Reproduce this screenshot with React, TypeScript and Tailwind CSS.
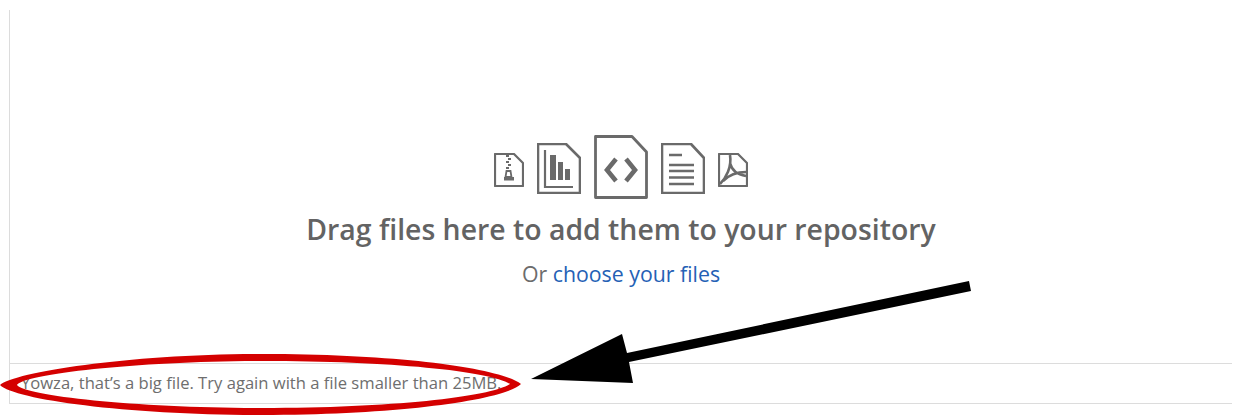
import React from 'react';

const iconStroke = '#6a6a6a';

function ZipIcon() {
  return (
    <svg width="30" height="34" viewBox="0 0 30 34" fill="none" stroke={iconStroke} className="mt-[18px]">
      <path d="M1 1H20L29 10V33H1Z" strokeWidth="2.2" strokeLinejoin="round" />
      <path d="M12 3h3M14 6h3M12 9h3M14 12h3M12 15h3" strokeWidth="1.8" />
      <path d="M12.5 18h4l1 6h-6z" strokeWidth="1.8" />
      <rect x="10" y="24" width="10" height="3.5" fill={iconStroke} stroke="none" />
    </svg>
  );
}

function ChartIcon() {
  return (
    <svg width="44" height="51" viewBox="0 0 44 51" fill="none" stroke={iconStroke} className="mt-[8px]">
      <path d="M1 1H29L43 15V50H1Z" strokeWidth="2.6" strokeLinejoin="round" />
      <path d="M8 7V44H36" strokeWidth="2.2" />
      <rect x="13" y="12" width="6" height="25" fill={iconStroke} stroke="none" />
      <rect x="21" y="19" width="5" height="18" fill={iconStroke} stroke="none" />
      <rect x="28" y="26" width="5" height="11" fill={iconStroke} stroke="none" />
    </svg>
  );
}

function CodeIcon() {
  return (
    <svg width="54" height="64" viewBox="0 0 54 64" fill="none" stroke={iconStroke}>
      <path d="M1.5 1.5H38L52.5 17V62.5H1.5Z" strokeWidth="2.8" strokeLinejoin="round" />
      <path d="M22 24L13 35L22 46M32 24L41 35L32 46" strokeWidth="4.6" />
    </svg>
  );
}

function DocIcon() {
  return (
    <svg width="44" height="51" viewBox="0 0 44 51" fill="none" stroke={iconStroke} className="mt-[8px]">
      <path d="M1 1H30L43 15V50H1Z" strokeWidth="2.6" strokeLinejoin="round" />
      <path d="M8 12H21M8 22H33M8 28H33M8 34.5H33M8 41H33" strokeWidth="2.4" />
    </svg>
  );
}

function PdfIcon() {
  return (
    <svg width="30" height="34" viewBox="0 0 30 34" fill="none" stroke={iconStroke} className="mt-[18px]">
      <path d="M1 1H20L29 10V33H1Z" strokeWidth="2.2" strokeLinejoin="round" />
      <path d="M2 31C8 25 14 14 12 2M12 10C14 18 21 22 28 23M5 28C11 22 19 19 28 19" strokeWidth="2.6" />
    </svg>
  );
}

export default function App() {
  return (
    <div className="relative h-[420px] w-[1240px] overflow-hidden bg-white font-['Open_Sans','Noto_Sans',sans-serif]">
      <div className="ml-[9px] mr-2 pt-[10px]">
        <div className="border-l border-[#dcdcdc]">
          <div className="flex h-[353px] flex-col items-center pt-[125px]">
            <div className="flex items-start gap-[13px]">
              <ZipIcon />
              <ChartIcon />
              <CodeIcon />
              <DocIcon />
              <PdfIcon />
            </div>
            <h2 className="mt-[11px] text-[28.4px] leading-[38px] font-semibold text-[#636363]">
              Drag files here to add them to your repository
            </h2>
            <p className="mt-[12px] text-[21.3px] leading-[28px] text-[#6c6c6c]">
              Or <a className="text-[#2561b5]">choose your files</a>
            </p>
          </div>
          <div className="flex h-[41px] items-center border-y border-[#dcdcdc] pl-[11px] text-[16.6px] text-[#6e6e6e]">
            Yowza, that’s a big file. Try again with a file smaller than 25MB.
          </div>
        </div>
      </div>

      {/* hand drawn annotation on top of the screenshot */}
      <svg width="1240" height="420" viewBox="0 0 1240 420" className="absolute inset-0">
        <path
          fillRule="evenodd"
          fill="#d40000"
          d="M0 385C15 372 130 354 262 354C400 354 500 368 521 384C505 400 400 415 262 415C130 415 15 400 0 385ZM17 385C24 396 140 408 262 408C390 408 490 397 510 384C490 371 390 361 262 361C140 361 24 374 17 385Z"
        />
        <path fill="#000" d="M531 379L622 334L627 353L969 281L971 291L629 362L633 383Z" />
      </svg>
    </div>
  );
}
